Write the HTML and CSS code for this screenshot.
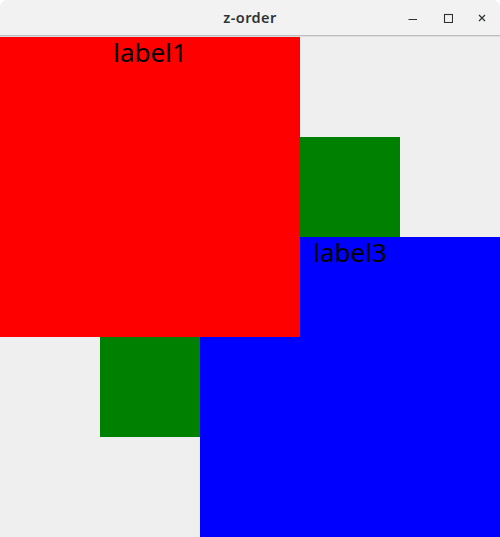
FILE: index.html
```html
<!DOCTYPE html>
<html>
<head>
<meta charset="utf-8">
<link rel="stylesheet" href="styles.css">
</head>
<body>
<div class="window">
  <div class="titlebar">
    <div class="title">z-order</div>
    <div class="controls">
      <span class="ctl"><svg width="10" height="10" viewBox="0 0 10 10"><path d="M0.5 6.5H9" stroke="#2e3436" stroke-width="1.2"/></svg></span>
      <span class="ctl"><svg width="10" height="10" viewBox="0 0 10 10"><rect x="1.5" y="1.5" width="8" height="8" fill="none" stroke="#2e3436" stroke-width="1.1"/></svg></span>
      <span class="ctl"><svg width="10" height="10" viewBox="0 0 10 10"><path d="M2 2L8 8M8 2L2 8" stroke="#2e3436" stroke-width="1.3"/></svg></span>
    </div>
  </div>
  <div class="sep"></div>
  <div class="canvas">
    <div class="box green"><span class="label">label2</span></div>
    <div class="box blue"><span class="label">label3</span></div>
    <div class="box red"><span class="label">label1</span></div>
  </div>
</div>
</body>
</html>
```
FILE: styles.css
```css
html, body {
  margin: 0;
  padding: 0;
  background: #ffffff;
}
.window {
  width: 500px;
  height: 537px;
  overflow: hidden;
  border-radius: 8px 8px 0 0;
  background: #efefef;
  display: flex;
  flex-direction: column;
}
.titlebar {
  height: 35px;
  flex: none;
  background: #f2f2f2;
  display: flex;
  align-items: center;
  justify-content: center;
  position: relative;
  font-family: "Noto Sans", "DejaVu Sans", sans-serif;
}
.title {
  font-size: 14.5px;
  font-weight: 600;
  color: #2e3436;
  letter-spacing: 0.4px;
  padding-bottom: 1px;
}
.controls {
  position: absolute;
  right: 0;
  top: 0;
  height: 35px;
  display: flex;
  align-items: center;
}
.ctl {
  width: 33px;
  display: flex;
  justify-content: center;
  align-items: center;
  height: 35px;
}
.controls .ctl:first-child { margin-right: 2px; }
.controls .ctl:last-child { margin-left: 1px; margin-right: 2px; }
.sep {
  height: 1px;
  background: #bdbdbd;
  border-bottom: 1px solid #dedede;
  flex: none;
}
.canvas {
  position: relative;
  flex: 1;
  background: #efefef;
}
.box {
  position: absolute;
  width: 300px;
  height: 300px;
  display: flex;
  justify-content: center;
  align-items: flex-start;
}
.label {
  font-family: "Noto Sans", "DejaVu Sans", sans-serif;
  font-size: 26px;
  line-height: 32px;
  color: #000;
  margin-top: -1px;
}
.red { left: 0; top: 0; background: #ff0000; z-index: 3; }
.green { left: 100px; top: 100px; background: #008000; z-index: 1; }
.blue { left: 200px; top: 200px; background: #0000ff; z-index: 2; }
```
